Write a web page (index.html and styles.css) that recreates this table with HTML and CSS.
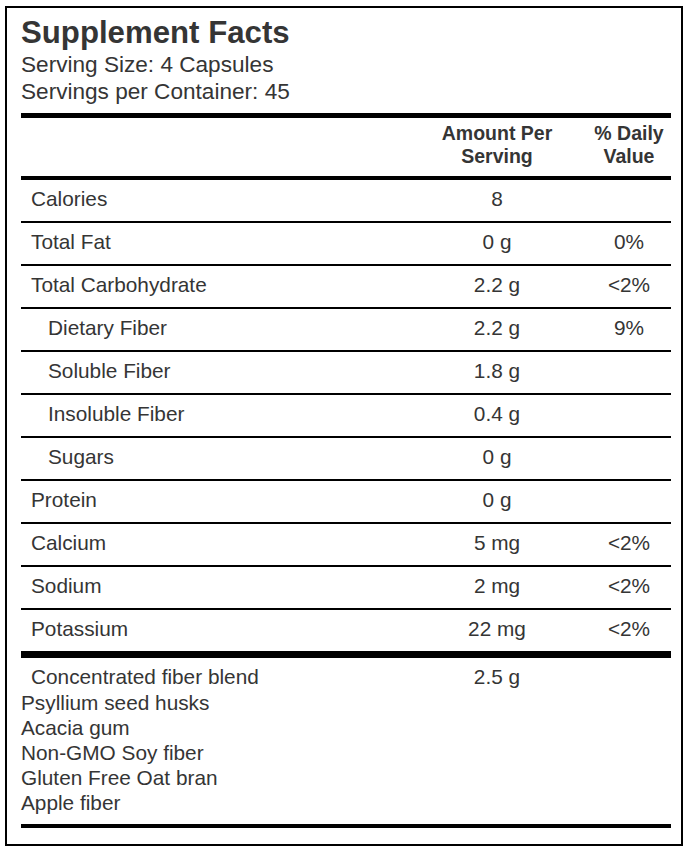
FILE: index.html
```html
<!DOCTYPE html>
<html lang="en">
<head>
<meta charset="utf-8">
<title>Supplement Facts</title>
<link rel="stylesheet" href="styles.css">
</head>
<body>
<div class="label">
  <h1 class="title">Supplement Facts</h1>
  <p class="serving">Serving Size: 4 Capsules</p>
  <p class="serving">Servings per Container: 45</p>
  <div class="facts">
    <div class="row head">
      <div class="name"></div>
      <div class="amt">Amount Per<br>Serving</div>
      <div class="dv">% Daily<br>Value</div>
    </div>
    <div class="row"><div class="name">Calories</div><div class="amt">8</div><div class="dv"></div></div>
    <div class="row"><div class="name">Total Fat</div><div class="amt">0 g</div><div class="dv">0%</div></div>
    <div class="row"><div class="name">Total Carbohydrate</div><div class="amt">2.2 g</div><div class="dv">&lt;2%</div></div>
    <div class="row"><div class="name sub">Dietary Fiber</div><div class="amt">2.2 g</div><div class="dv">9%</div></div>
    <div class="row"><div class="name sub">Soluble Fiber</div><div class="amt">1.8 g</div><div class="dv"></div></div>
    <div class="row"><div class="name sub">Insoluble Fiber</div><div class="amt">0.4 g</div><div class="dv"></div></div>
    <div class="row"><div class="name sub">Sugars</div><div class="amt">0 g</div><div class="dv"></div></div>
    <div class="row"><div class="name">Protein</div><div class="amt">0 g</div><div class="dv"></div></div>
    <div class="row"><div class="name">Calcium</div><div class="amt">5 mg</div><div class="dv">&lt;2%</div></div>
    <div class="row"><div class="name">Sodium</div><div class="amt">2 mg</div><div class="dv">&lt;2%</div></div>
    <div class="row last"><div class="name">Potassium</div><div class="amt">22 mg</div><div class="dv">&lt;2%</div></div>
    <div class="blend">
      <div class="name">Concentrated fiber blend</div><div class="amt">2.5 g</div><div class="dv"></div>
    </div>
    <ul class="ingredients">
      <li>Psyllium seed husks</li>
      <li>Acacia gum</li>
      <li>Non-GMO Soy fiber</li>
      <li>Gluten Free Oat bran</li>
      <li>Apple fiber</li>
    </ul>
  </div>
</div>
</body>
</html>
```

FILE: styles.css
```css
html, body {
  margin: 0;
  padding: 0;
  background: #fff;
}

body {
  font-family: "Liberation Sans", Arial, sans-serif;
  color: #353535;
}

.label {
  box-sizing: border-box;
  width: 678px;
  margin: 6px 0 0 5px;
  border: 2px solid #000;
  padding: 7px 10px 16px 14px;
}

.title {
  margin: 0;
  font-size: 31.2px;
  line-height: 36px;
  font-weight: bold;
}

.serving {
  margin: 0;
  font-size: 22.6px;
  line-height: 27px;
}

.facts {
  width: 650px;
  margin-top: 8px;
  border-top: 5px solid #000;
  border-bottom: 4px solid #000;
  font-size: 20.8px;
}

.row {
  display: grid;
  grid-template-columns: 1fr 180px 84px;
  align-items: center;
  height: 38px;
  padding-bottom: 3px;
  border-bottom: 2px solid #000;
}

.row.head {
  height: 62px;
  align-items: start;
  padding-top: 4px;
  padding-bottom: 0;
  box-sizing: border-box;
  border-bottom: 4px solid #000;
  font-size: 19.5px;
  line-height: 23px;
  font-weight: bold;
}

.row.last {
  border-bottom: 7px solid #000;
}

.name {
  padding-left: 10px;
}

.name.sub {
  padding-left: 27px;
}

.amt, .dv {
  text-align: center;
}

.blend {
  display: grid;
  grid-template-columns: 1fr 180px 84px;
  padding-top: 7px;
  line-height: 23px;
}

.ingredients {
  list-style: none;
  margin: 2px 0 9px;
  padding: 0;
  line-height: 25px;
}
```
